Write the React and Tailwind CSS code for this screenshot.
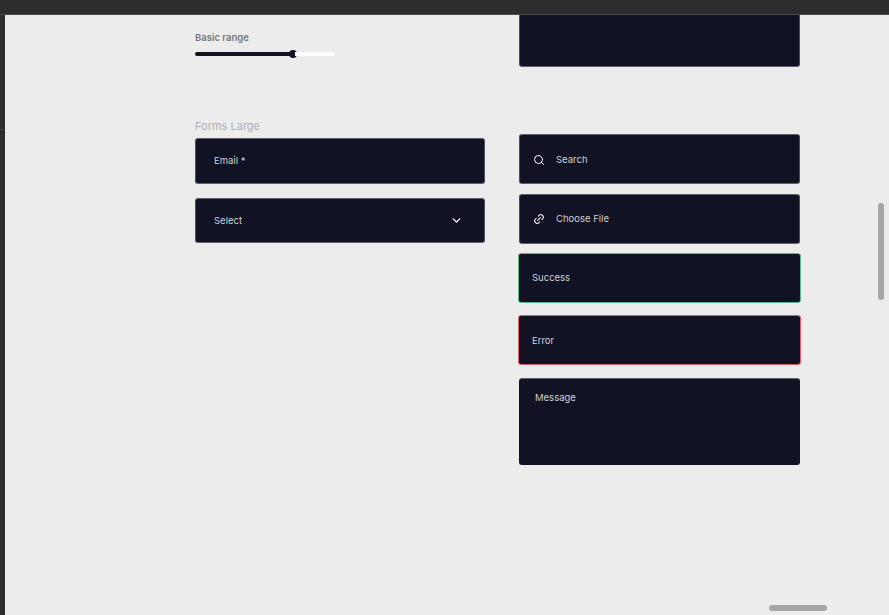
import { Search, Link2, ChevronDown } from 'lucide-react'

const field = "flex items-center bg-[#111324] rounded-[3px] border border-[#4c4d5a] border-t-[#62636f] border-b-[#62636f] text-[9.5px] text-[#cfd0d5] leading-none"

export default function App() {
  return (
    <div className="relative h-[615px] w-[889px] overflow-hidden bg-[#ececec] font-['Inter','Liberation_Sans',sans-serif]">
      <div className="h-[15px] bg-[#2d2d2d] border-b border-[#4a4a4a]" />

      <div className="flex h-[600px]">
        {/* left strip */}
        <div className="w-[5px] h-full bg-[#2d2d2d]">
          <div className="h-[115px] border-b border-[#444444]" />
        </div>

        <div className="flex pl-[190px]">
          {/* left column */}
          <div className="w-[290px] flex flex-col">
            <div className="pt-[16px] h-[26px] text-[9.5px] font-semibold text-[#77777c] leading-[12px] translate-y-px">Basic range</div>
            <div className="flex items-center w-[140px] h-[8px] mt-[9px]">
              <div className="w-[96px] h-[4px] bg-[#111324] rounded-l-full" />
              <div className="w-[8px] h-[8px] -ml-[2px] rounded-full bg-[#111324] shrink-0" />
              <div className="flex-1 h-[4px] -ml-[2px] bg-white rounded-r-full" />
            </div>
            <div className="mt-[61px] h-[14px] text-[11px] text-[#b0b0b2] leading-[14px]">Forms Large</div>
            <div className={`${field} h-[46px] mt-[5px] pl-[18px]`}>Email *</div>
            <div className={`${field} h-[45px] mt-[14px] pl-[18px] pr-[21px] justify-between`}>
              <span>Select</span>
              <ChevronDown size={13} strokeWidth={2.5} className="text-white" />
            </div>
          </div>

          {/* right column */}
          <div className="w-[281px] ml-[34px] flex flex-col">
            <div className="h-[52px] bg-[#111324] rounded-b-[3px] border-b border-r border-l border-[#4c4d5a] border-b-[#62636f]" />
            <div className={`${field} h-[50px] mt-[67px] pl-[14px] pt-px`}>
              <Search size={12} strokeWidth={2} className="text-white mr-[10px] -ml-px" />
              <span className="ml-px">Search</span>
            </div>
            <div className={`${field} h-[50px] mt-[10px] pl-[14px]`}>
              <Link2 size={12} strokeWidth={2} className="text-white mr-[10px] -ml-px -rotate-45" />
              <span className="ml-px">Choose File</span>
            </div>
            <div className="flex items-center h-[50px] mt-[9px] -mx-px pl-[13px] bg-[#111324] rounded-[3px] border border-[#5cb88c] text-[9.5px] text-[#cfd0d5] leading-none">Success</div>
            <div className="flex items-center h-[50px] mt-[12px] -mx-px pl-[13px] pt-px bg-[#111324] rounded-[3px] border border-[#d9606a] text-[9.5px] text-[#cfd0d5] leading-none">Error</div>
            <div className="h-[87px] mt-[13px] pl-[16px] pt-[14px] bg-[#111324] rounded-[3px] border-t border-[#62636f] text-[9.5px] text-[#cfd0d5] leading-none">Message</div>
          </div>
        </div>
      </div>

      {/* overlay scrollbars */}
      <div className="absolute left-[878px] top-[203px] w-[6px] h-[97px] rounded-full bg-[#a6a6a6]" />
      <div className="absolute left-[769px] top-[605px] w-[58px] h-[6px] rounded-full bg-[#a6a6a6]" />
    </div>
  )
}
